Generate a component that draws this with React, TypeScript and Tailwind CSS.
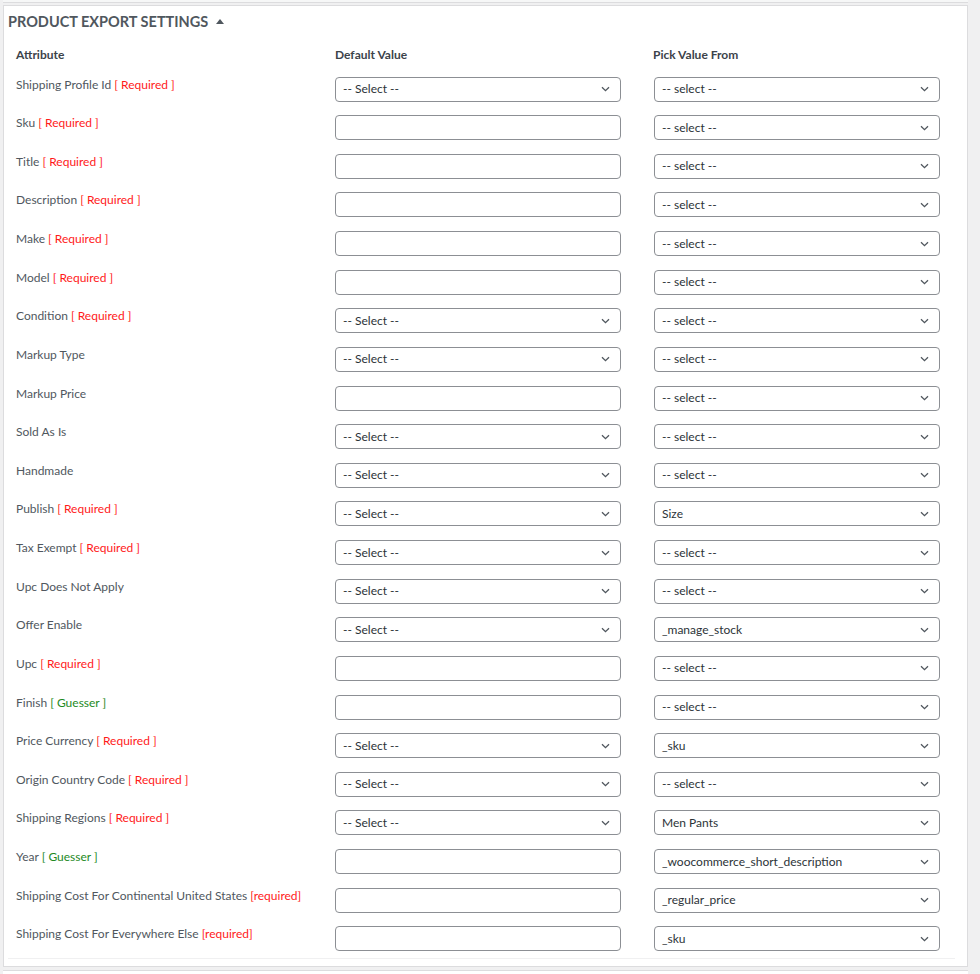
import React from "react";

type Tag = "req" | "guess" | "lower" | null;

interface Row {
  label: string;
  tag: Tag;
  kind: "select" | "input";
  pick: string;
}

const rows: Row[] = [
  { label: "Shipping Profile Id", tag: "req", kind: "select", pick: "-- select --" },
  { label: "Sku", tag: "req", kind: "input", pick: "-- select --" },
  { label: "Title", tag: "req", kind: "input", pick: "-- select --" },
  { label: "Description", tag: "req", kind: "input", pick: "-- select --" },
  { label: "Make", tag: "req", kind: "input", pick: "-- select --" },
  { label: "Model", tag: "req", kind: "input", pick: "-- select --" },
  { label: "Condition", tag: "req", kind: "select", pick: "-- select --" },
  { label: "Markup Type", tag: null, kind: "select", pick: "-- select --" },
  { label: "Markup Price", tag: null, kind: "input", pick: "-- select --" },
  { label: "Sold As Is", tag: null, kind: "select", pick: "-- select --" },
  { label: "Handmade", tag: null, kind: "select", pick: "-- select --" },
  { label: "Publish", tag: "req", kind: "select", pick: "Size" },
  { label: "Tax Exempt", tag: "req", kind: "select", pick: "-- select --" },
  { label: "Upc Does Not Apply", tag: null, kind: "select", pick: "-- select --" },
  { label: "Offer Enable", tag: null, kind: "select", pick: "_manage_stock" },
  { label: "Upc", tag: "req", kind: "input", pick: "-- select --" },
  { label: "Finish", tag: "guess", kind: "input", pick: "-- select --" },
  { label: "Price Currency", tag: "req", kind: "select", pick: "_sku" },
  { label: "Origin Country Code", tag: "req", kind: "select", pick: "-- select --" },
  { label: "Shipping Regions", tag: "req", kind: "select", pick: "Men Pants" },
  { label: "Year", tag: "guess", kind: "input", pick: "_woocommerce_short_description" },
  { label: "Shipping Cost For Continental United States", tag: "lower", kind: "input", pick: "_regular_price" },
  { label: "Shipping Cost For Everywhere Else", tag: "lower", kind: "input", pick: "_sku" },
];

function Chevron() {
  return (
    <svg width="9" height="6" viewBox="0 0 9 6" className="shrink-0">
      <path d="M1 1.2l3.5 3.5 3.5-3.5" fill="none" stroke="#50575e" strokeWidth="1.3" />
    </svg>
  );
}

function FakeSelect({ value }: { value: string }) {
  return (
    <div className="flex h-[25px] w-[286px] items-center justify-between rounded-[4px] border border-[#8c8f94] bg-white pl-[7px] pr-[10px] text-[12px] text-[#2c3338]">
      <span>{value}</span>
      <Chevron />
    </div>
  );
}

function FakeInput() {
  return <div className="h-[25px] w-[286px] rounded-[4px] border border-[#8c8f94] bg-white" />;
}

function TagText({ tag }: { tag: Tag }) {
  if (tag === "req") return <span className="text-[#ff1a1a]"> [ Required ]</span>;
  if (tag === "guess") return <span className="text-[#1e8a1e]"> [ Guesser ]</span>;
  if (tag === "lower") return <span className="text-[#ff1a1a]"> [required]</span>;
  return null;
}

export default function App() {
  return (
    <div className="min-h-screen bg-[#f0f0f1] font-['Lato','Liberation_Sans',sans-serif]">
      {/* tail of the panel above */}
      <div className="ml-[3px] h-[3px] w-[965px] border-b border-[#dcdcde] bg-[#f6f7f7]" />

      <div className="ml-[3px] mt-[2px] w-[965px] border border-[#dcdcde] bg-white px-[4px] pb-[7px]">
        <div className="flex h-[31px] items-center gap-[8px] text-[14.5px] font-bold text-[#50575e]">
          <span>PRODUCT EXPORT SETTINGS</span>
          <svg width="8" height="5" viewBox="0 0 8 5">
            <path d="M0 5L4 0l4 5z" fill="#50575e" />
          </svg>
        </div>

        <div className="w-[947px] border-b border-[#f0f0f1]">
          <div className="grid h-[33px] grid-cols-[319px_318px_1fr] items-end pb-[7px] text-[12px] font-bold leading-[16px] text-[#3c434a]">
            <div className="pl-[8px]">Attribute</div>
            <div className="pl-[8px]">Default Value</div>
            <div className="pl-[8px]">Pick Value From</div>
          </div>

          {rows.map((r) => (
            <div
              key={r.label}
              className="grid h-[38.64px] grid-cols-[319px_318px_1fr] items-start pt-[6.5px]"
            >
              <div className="pl-[8px] text-[12px] leading-[16px] text-[#50575e]">
                {r.label}
                <TagText tag={r.tag} />
              </div>
              <div className="pl-[8px]">
                {r.kind === "select" ? <FakeSelect value="-- Select --" /> : <FakeInput />}
              </div>
              <div className="pl-[9px]">
                <FakeSelect value={r.pick} />
              </div>
            </div>
          ))}
        </div>
      </div>

      <div className="ml-[3px] mt-[3px] h-[10px] w-[965px] border-t border-[#dcdcde] bg-white" />
    </div>
  );
}
